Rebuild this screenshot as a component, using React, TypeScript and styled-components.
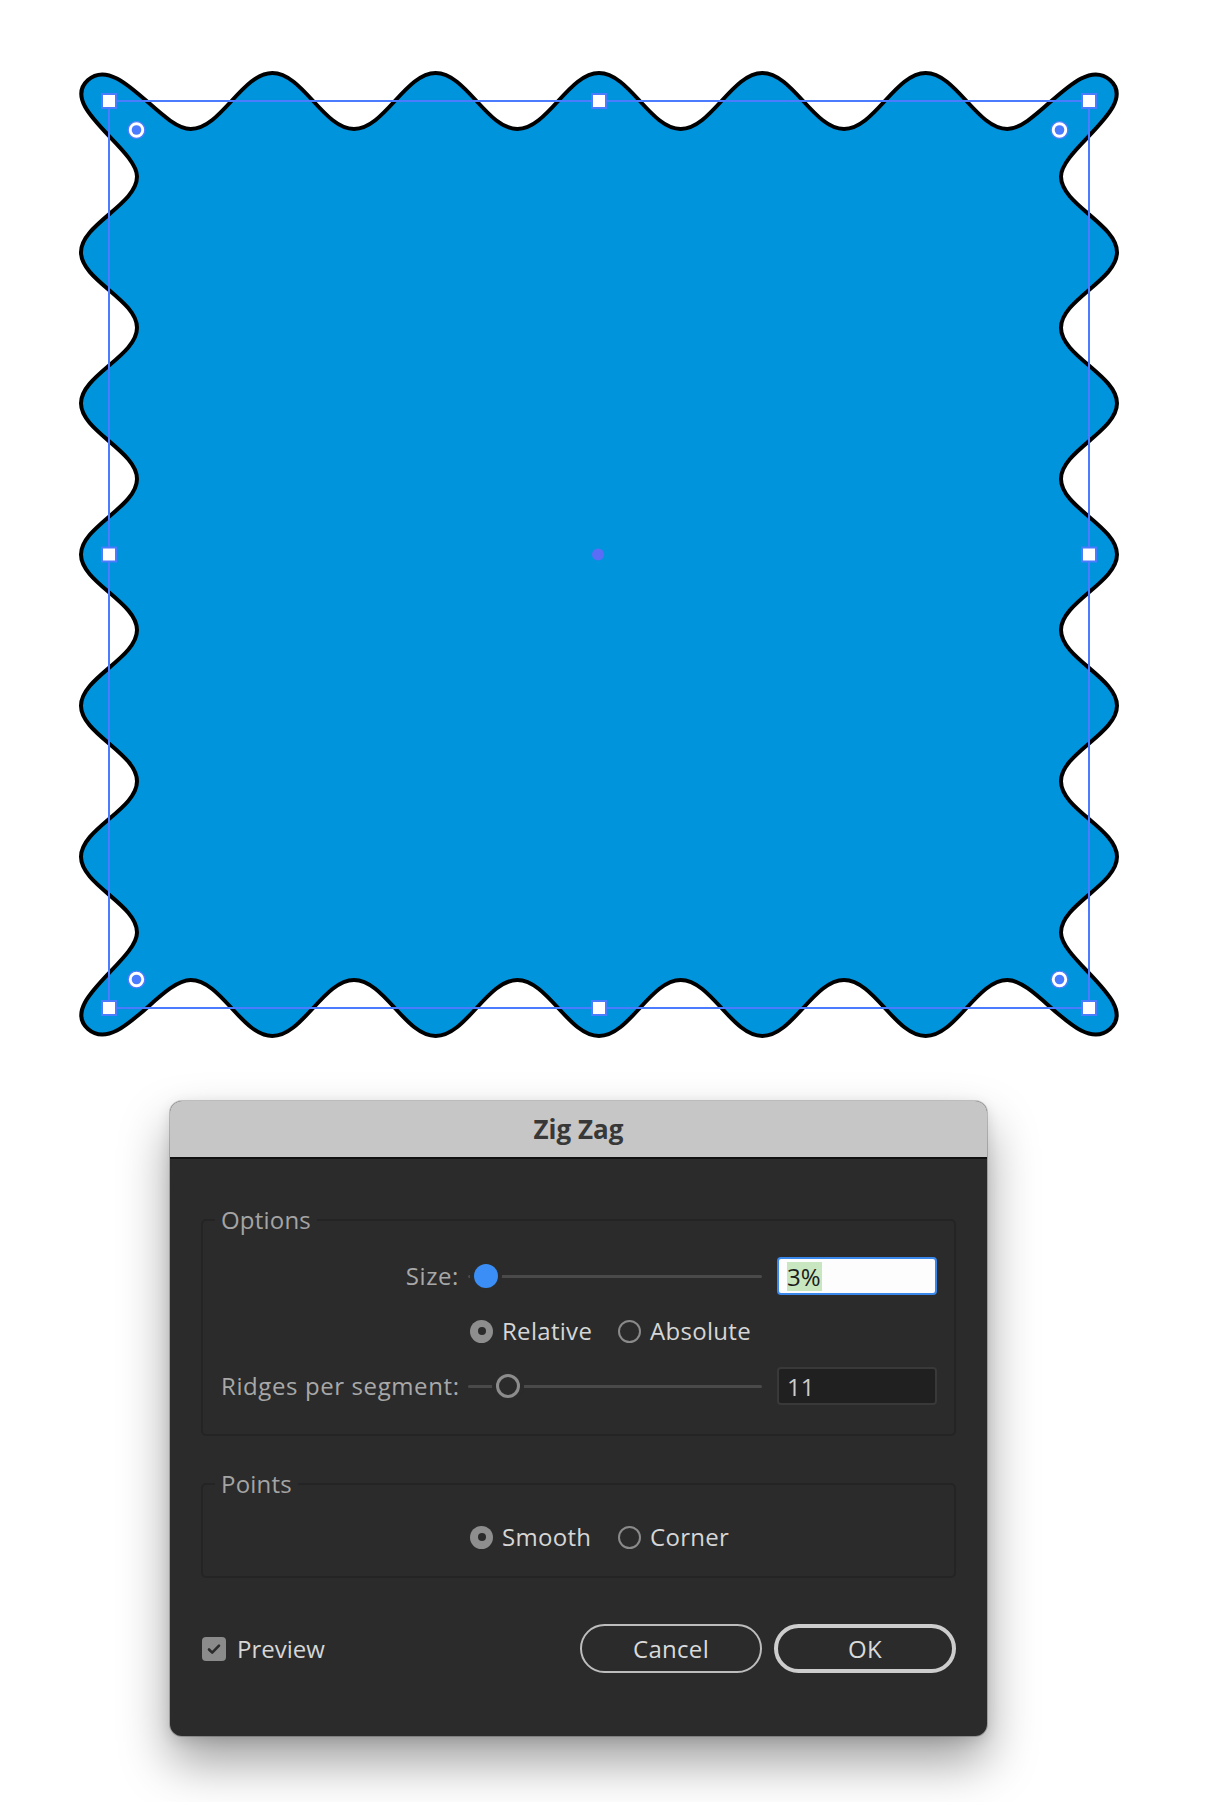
import React from 'react'
import styled, { createGlobalStyle } from 'styled-components'

const GlobalStyle = createGlobalStyle`
  html, body {
    margin: 0;
    padding: 0;
    background: #ffffff;
  }
  body {
    font-family: "Open Sans", "Noto Sans", "Liberation Sans", sans-serif;
  }
  #root {
    width: 1214px;
    min-height: 1802px;
  }
`

// artwork geometry (selection box of the zig-zagged rectangle)
const BOX = { x0: 109, y0: 101, x1: 1089, y1: 1008 }
const AMP = 28
const GAPS = 12
const CORNER_OUT = 21
const CORNER_HANDLE = 40
const SEL = '#4b7bff'

type Pt = { x: number; y: number; corner: boolean; tx: number; ty: number; h: number }

function ridgePoints(): Pt[] {
  const { x0, y0, x1, y1 } = BOX
  const dx = (x1 - x0) / GAPS
  const dy = (y1 - y0) / GAPS
  const edges = [
    { cx: x0, cy: y0, sx: dx, sy: 0, nx: 0, ny: -1, ox: -1, oy: -1 },
    { cx: x1, cy: y0, sx: 0, sy: dy, nx: 1, ny: 0, ox: 1, oy: -1 },
    { cx: x1, cy: y1, sx: -dx, sy: 0, nx: 0, ny: 1, ox: 1, oy: 1 },
    { cx: x0, cy: y1, sx: 0, sy: -dy, nx: -1, ny: 0, ox: -1, oy: 1 },
  ]
  const pts: Pt[] = []
  edges.forEach((e) => {
    const step = Math.hypot(e.sx, e.sy)
    pts.push({ x: e.cx + e.ox * CORNER_OUT, y: e.cy + e.oy * CORNER_OUT, corner: true, tx: 0, ty: 0, h: CORNER_HANDLE })
    for (let i = 1; i < GAPS; i++) {
      const sign = i % 2 ? -1 : 1
      pts.push({
        x: e.cx + i * e.sx + e.nx * AMP * sign,
        y: e.cy + i * e.sy + e.ny * AMP * sign,
        corner: false,
        tx: e.sx / step,
        ty: e.sy / step,
        h: step * 0.37,
      })
    }
  })
  const n = pts.length
  pts.forEach((p, i) => {
    if (!p.corner) return
    const a = pts[(i - 1 + n) % n]
    const b = pts[(i + 1) % n]
    const len = Math.hypot(b.x - a.x, b.y - a.y)
    p.tx = (b.x - a.x) / len
    p.ty = (b.y - a.y) / len
  })
  return pts
}

function ridgePath(): string {
  const pts = ridgePoints()
  const f = (v: number) => v.toFixed(2)
  let d = `M${f(pts[0].x)} ${f(pts[0].y)}`
  pts.forEach((p, i) => {
    const q = pts[(i + 1) % pts.length]
    d += ` C${f(p.x + p.tx * p.h)} ${f(p.y + p.ty * p.h)} ${f(q.x - q.tx * q.h)} ${f(q.y - q.ty * q.h)} ${f(q.x)} ${f(q.y)}`
  })
  return d + ' Z'
}

const Page = styled.main`
  width: 1214px;
  display: flex;
  flex-direction: column;
  align-items: flex-start;
`

const Artboard = styled.svg`
  display: block;
  flex: none;
`

const Dialog = styled.section`
  margin-left: 170px;
  width: 817px;
  border-radius: 12px;
  background: #2b2b2b;
  overflow: hidden;
  box-shadow: 0 26px 50px rgba(0, 0, 0, 0.38), 0 4px 14px rgba(0, 0, 0, 0.12), 0 0 0 1px rgba(0, 0, 0, 0.2);
`

const TitleBar = styled.header`
  height: 56px;
  background: #c6c6c6;
  border-bottom: 2px solid #101010;
  display: flex;
  align-items: center;
  justify-content: center;
`

const Title = styled.h1`
  margin: 0;
  font-size: 26px;
  font-weight: 700;
  color: #383838;
`

const DialogBody = styled.div`
  padding: 46px 31px 63px;
`

const Group = styled.fieldset<{ $top: number; $bottom: number }>`
  margin: 0;
  min-width: 0;
  padding: ${(p) => p.$top}px 17px ${(p) => p.$bottom}px 18px;
  border: 2px solid #242424;
  border-radius: 5px;

  & + & {
    margin-top: 33px;
  }
`

const Legend = styled.legend`
  margin-left: -6px;
  padding: 0 6px;
  font-size: 24px;
  line-height: 30px;
  letter-spacing: 0.2px;
  color: #a4a4a4;
`

const FieldGrid = styled.div`
  display: grid;
  grid-template-columns: 238px 294px 166px;
  column-gap: 9px;
  row-gap: 21px;
  align-items: center;
`

const FieldLabel = styled.span`
  text-align: right;
  font-size: 24px;
  line-height: 30px;
  letter-spacing: 0.6px;
  color: #a8a8a8;
  white-space: nowrap;
`

const SliderTrack = styled.div`
  position: relative;
  height: 3px;
  border-radius: 2px;
  background: #4a4a4a;
`

const SliderThumb = styled.span<{ $at: number; $hollow?: boolean }>`
  position: absolute;
  top: 50%;
  left: ${(p) => p.$at - 12}px;
  width: 24px;
  height: 24px;
  margin-top: -12px;
  box-sizing: border-box;
  border-radius: 50%;
  background: ${(p) => (p.$hollow ? '#2b2b2b' : '#3a8ef5')};
  border: ${(p) => (p.$hollow ? '3px solid #8c8c8c' : 'none')};
  box-shadow: 0 0 0 4px #2b2b2b;
`

const NumberField = styled.div<{ $active?: boolean }>`
  justify-self: end;
  width: 160px;
  height: 38px;
  box-sizing: border-box;
  display: flex;
  align-items: center;
  padding-left: 8px;
  border-radius: 4px;
  border: 2px solid ${(p) => (p.$active ? '#3a88ec' : '#393939')};
  background: ${(p) => (p.$active ? '#fdfdfd' : '#202020')};
  color: ${(p) => (p.$active ? '#1c1c1c' : '#cdcdcd')};
  font-size: 24px;
`

const Highlight = styled.span`
  background: #c8e6c0;
  line-height: 29px;
  padding-right: 1px;
`

const RadioRow = styled.div`
  grid-column: 2 / 4;
  display: grid;
  grid-template-columns: 148px auto;
  padding-left: 2px;
`

const RadioOption = styled.label`
  display: flex;
  align-items: center;
  gap: 9px;
  font-size: 24px;
  line-height: 30px;
  letter-spacing: 0.3px;
  color: #d6d6d6;
`

const RadioDot = styled.span<{ $checked?: boolean }>`
  width: 23px;
  height: 23px;
  box-sizing: border-box;
  border-radius: 50%;
  display: grid;
  place-items: center;
  background: ${(p) => (p.$checked ? '#8e8e8e' : 'transparent')};
  border: ${(p) => (p.$checked ? 'none' : '2px solid #8a8a8a')};

  &::after {
    content: '';
    display: ${(p) => (p.$checked ? 'block' : 'none')};
    width: 8px;
    height: 8px;
    border-radius: 50%;
    background: #2b2b2b;
  }
`

const Footer = styled.div`
  margin-top: 46px;
  height: 49px;
  display: flex;
  align-items: center;
  justify-content: space-between;
`

const CheckRow = styled.label`
  display: flex;
  align-items: center;
  gap: 11px;
  margin-left: 1px;
  font-size: 24px;
  color: #d6d6d6;
`

const CheckBox = styled.span`
  width: 24px;
  height: 24px;
  border-radius: 4px;
  background: #8b8b8b;
  display: grid;
  place-items: center;
`

const ButtonRow = styled.div`
  display: flex;
  gap: 12px;
`

const PillButton = styled.button<{ $primary?: boolean }>`
  width: 182px;
  height: 49px;
  box-sizing: border-box;
  border-radius: 25px;
  background: transparent;
  border: ${(p) => (p.$primary ? '4px solid #cdcdcd' : '2px solid #bdbdbd')};
  color: #dadada;
  font-family: inherit;
  font-size: 24px;
  letter-spacing: 0.3px;
  padding: 0;
`

function Handle({ x, y }: { x: number; y: number }) {
  return <rect x={x - 7} y={y - 7} width={14} height={14} fill="#fff" stroke={SEL} strokeWidth={2} />
}

function CornerWidget({ x, y }: { x: number; y: number }) {
  return (
    <g>
      <circle cx={x} cy={y} r={8.4} fill="#fff" stroke={SEL} strokeWidth={1.4} />
      <circle cx={x} cy={y} r={4.8} fill={SEL} />
    </g>
  )
}

function Artwork() {
  const { x0, y0, x1, y1 } = BOX
  const mx = (x0 + x1) / 2
  const my = (y0 + y1) / 2
  return (
    <Artboard width={1214} height={1101} viewBox="0 0 1214 1101">
      <path d={ridgePath()} fill="#0094dd" stroke="#000" strokeWidth={4} strokeLinejoin="round" />
      <rect x={x0} y={y0} width={x1 - x0} height={y1 - y0} fill="none" stroke={SEL} strokeWidth={2} />
      {[
        [x0, y0], [mx, y0], [x1, y0],
        [x0, my], [x1, my],
        [x0, y1], [mx, y1], [x1, y1],
      ].map(([x, y]) => (
        <Handle key={`${x}-${y}`} x={x} y={y} />
      ))}
      <CornerWidget x={x0 + 27.5} y={y0 + 29} />
      <CornerWidget x={x1 - 29.5} y={y0 + 29} />
      <CornerWidget x={x0 + 27.5} y={y1 - 28.5} />
      <CornerWidget x={x1 - 29.5} y={y1 - 28.5} />
      <circle cx={mx - 1} cy={my} r={6} fill="#5b6df7" />
    </Artboard>
  )
}

export default function App() {
  return (
    <>
      <GlobalStyle />
      <Page>
        <Artwork />
        <Dialog>
          <TitleBar>
            <Title>Zig Zag</Title>
          </TitleBar>
          <DialogBody>
            <Group $top={22} $bottom={29}>
              <Legend>Options</Legend>
              <FieldGrid>
                <FieldLabel>Size:</FieldLabel>
                <SliderTrack>
                  <SliderThumb $at={18} />
                </SliderTrack>
                <NumberField $active>
                  <Highlight>3%</Highlight>
                </NumberField>

                <RadioRow>
                  <RadioOption>
                    <RadioDot $checked />
                    Relative
                  </RadioOption>
                  <RadioOption>
                    <RadioDot />
                    Absolute
                  </RadioOption>
                </RadioRow>

                <FieldLabel>Ridges per segment:</FieldLabel>
                <SliderTrack>
                  <SliderThumb $at={40} $hollow />
                </SliderTrack>
                <NumberField>11</NumberField>
              </FieldGrid>
            </Group>

            <Group $top={23} $bottom={24}>
              <Legend>Points</Legend>
              <FieldGrid>
                <RadioRow>
                  <RadioOption>
                    <RadioDot $checked />
                    Smooth
                  </RadioOption>
                  <RadioOption>
                    <RadioDot />
                    Corner
                  </RadioOption>
                </RadioRow>
              </FieldGrid>
            </Group>

            <Footer>
              <CheckRow>
                <CheckBox>
                  <svg width="16" height="16" viewBox="0 0 16 16">
                    <path d="M3 8.5l3.2 3.2L13 4.6" fill="none" stroke="#2b2b2b" strokeWidth="2.6" strokeLinecap="round" strokeLinejoin="round" />
                  </svg>
                </CheckBox>
                Preview
              </CheckRow>
              <ButtonRow>
                <PillButton>Cancel</PillButton>
                <PillButton $primary>OK</PillButton>
              </ButtonRow>
            </Footer>
          </DialogBody>
        </Dialog>
      </Page>
    </>
  )
}
